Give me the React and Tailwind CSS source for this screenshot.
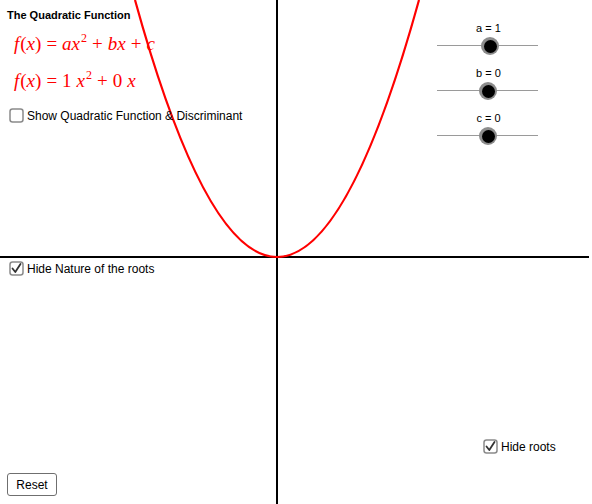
import React from "react";

function Box({ checked }) {
  return (
    <svg width="15" height="15" viewBox="0 0 15 15" className="shrink-0">
      <rect x="1" y="1" width="13" height="13" rx="2.5" fill="white" stroke="#8a8a8a" strokeWidth="1.5" />
      {checked && (
        <path d="M3.5 7.5 L6.3 11 L11.5 3" fill="none" stroke="#333" strokeWidth="1.8" strokeLinecap="round" strokeLinejoin="round" />
      )}
    </svg>
  );
}

function Check({ checked, label, className = "" }) {
  return (
    <div className={"flex items-center gap-[3px] text-[12px] leading-none text-black " + className}>
      <Box checked={checked} />
      <span>{label}</span>
    </div>
  );
}

function Slider({ label, knob }) {
  return (
    <div className="w-[101px] flex flex-col items-center">
      <div className="text-[11px] leading-none text-black ml-[2px] whitespace-pre">{label}</div>
      <div className="relative w-full h-[20px] mt-[2px]">
        <div className="absolute left-0 right-0 top-[9px] h-px bg-[#9a9a9a]" />
        <div
          className="absolute top-[1px] w-[18px] h-[18px] rounded-full bg-[#8c8c8c] flex items-center justify-center"
          style={{ left: knob - 9 }}
        >
          <div className="w-[13px] h-[13px] rounded-full bg-black" />
        </div>
      </div>
    </div>
  );
}

const serif = { fontFamily: '"Liberation Serif", "Times New Roman", serif' };

function Op({ children }) {
  return <span className="not-italic mx-[5px]">{children}</span>;
}
function Sup() {
  return <span className="not-italic text-[12px] relative -top-[8px] ml-[1px]">2</span>;
}
function Fx() {
  return (
    <>
      <span>f</span>
      <span className="not-italic ml-[1px]">(</span>
      <span>x</span>
      <span className="not-italic">)</span>
    </>
  );
}

export default function App() {
  return (
    <div
      className="relative w-[592px] h-[504px] bg-white overflow-hidden"
      style={{ fontFamily: '"Liberation Sans", Arial, sans-serif' }}
    >
      <svg className="absolute inset-0" width="592" height="504" viewBox="0 0 592 504">
        <line x1="277" y1="0" x2="277" y2="504" stroke="black" strokeWidth="2" />
        <line x1="0" y1="257" x2="589" y2="257" stroke="black" strokeWidth="2" />
        <path d="M135 0 Q277 514 419 0" fill="none" stroke="#f00" strokeWidth="2.2" />
      </svg>

      <div className="absolute left-[7px] top-[10px] flex flex-col">
        <div className="text-[11px] font-bold leading-none text-black">The Quadratic Function</div>
        <div
          className="ml-[7px] mt-[13px] flex items-baseline text-[19px] leading-[20px] text-[#f00] italic whitespace-nowrap"
          style={serif}
        >
          <Fx />
          <Op>=</Op>
          <span>a</span>
          <span>x</span>
          <Sup />
          <Op>+</Op>
          <span>b</span>
          <span>x</span>
          <Op>+</Op>
          <span>c</span>
        </div>
        <div
          className="ml-[7px] mt-[15px] flex items-baseline text-[19px] leading-[20px] text-[#f00] italic whitespace-nowrap"
          style={serif}
        >
          <Fx />
          <Op>=</Op>
          <span className="not-italic">1</span>
          <span className="ml-[5px]">x</span>
          <Sup />
          <Op>+</Op>
          <span className="not-italic">0</span>
          <span className="ml-[5px]">x</span>
        </div>
        <Check checked={false} label="Show Quadratic Function & Discriminant" className="ml-[2px] mt-[15px]" />
      </div>

      <div className="absolute left-[437px] top-[23px] flex flex-col gap-[12px]">
        <Slider label="a = 1" knob={53} />
        <Slider label="b = 0" knob={51} />
        <Slider label="c = 0" knob={51} />
      </div>

      <Check checked={true} label="Hide Nature of the roots" className="absolute left-[9px] top-[261px]" />
      <Check checked={true} label="Hide roots" className="absolute left-[483px] top-[439px]" />

      <button className="absolute left-[7px] top-[473px] w-[50px] h-[23px] rounded-[3px] border border-[#6f6f6f] bg-white text-[12px] text-black flex items-center justify-center">
        Reset
      </button>
    </div>
  );
}
